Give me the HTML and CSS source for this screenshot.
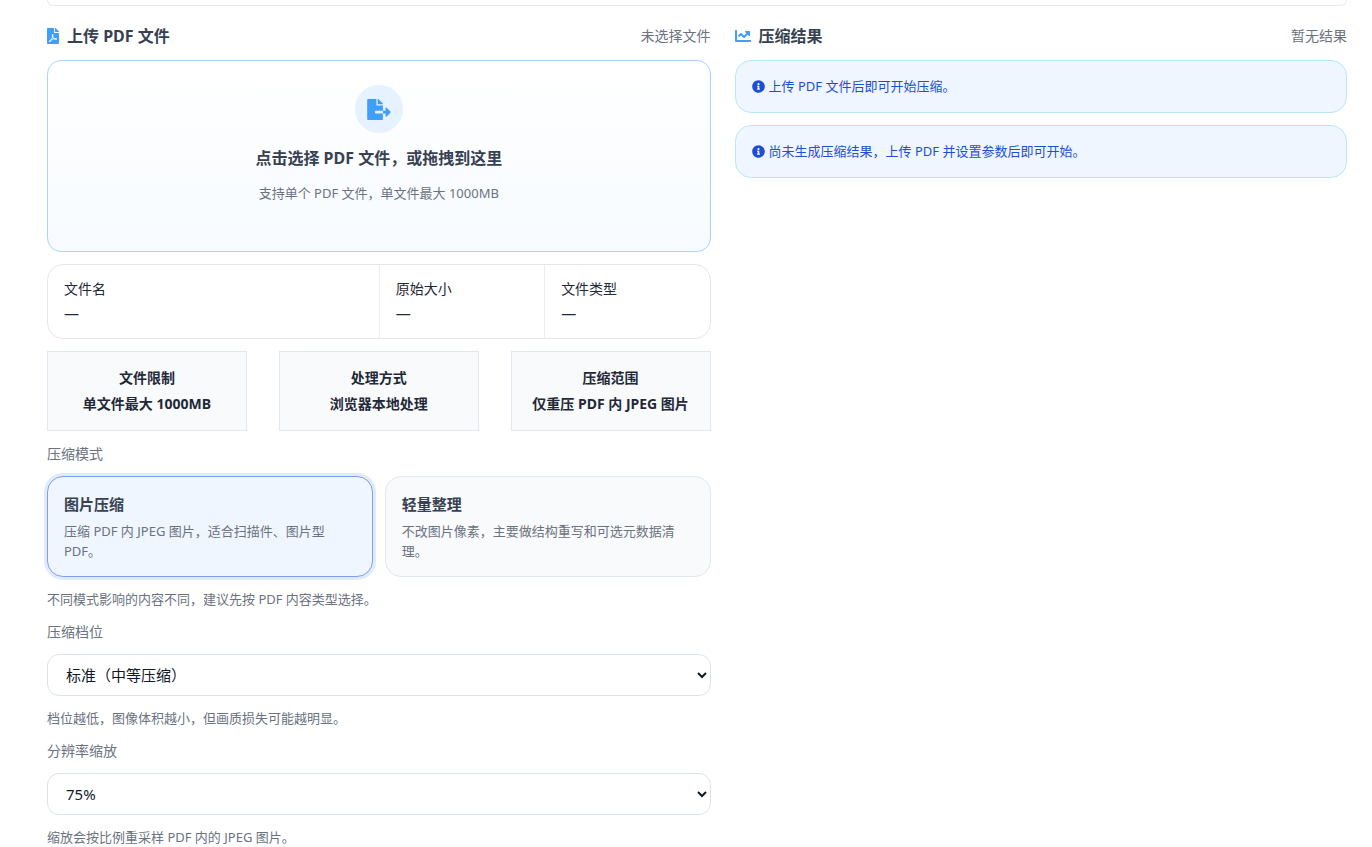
FILE: index.html
```html
<!DOCTYPE html>
<html lang="zh-CN">
<head>
    <meta charset="UTF-8">
    <meta name="viewport" content="width=device-width, initial-scale=1.0">
    <title>PDF 压缩</title>
    <link rel="stylesheet" href="styles.css">
</head>
<body>
    <div class="intro-card"></div>
    <main class="workspace">
        <section class="panel">
            <header class="panel-header">
                <h2>
                    <svg class="icon-file" viewBox="0 0 384 512" aria-hidden="true"><path d="M181.9 256.1c-5-16-4.9-46.9-2-46.9 8.4 0 7.6 36.9 2 46.9zm-1.7 47.2c-7.7 20.2-17.3 43.3-28.4 62.7 18.3-7 39-17.2 62.9-21.9-12.7-9.6-24.9-23.4-34.5-40.8zM86.1 428.1c0 .8 13.2-5.4 34.9-40.2-6.7 6.3-29.1 24.5-34.9 40.2zM248 160h136v328c0 13.3-10.7 24-24 24H24c-13.3 0-24-10.7-24-24V24C0 10.7 10.7 0 24 0h200v136c0 13.2 10.8 24 24 24zm-8 171.8c-20-12.2-33.3-29-42.7-53.8 4.5-18.5 11.6-46.6 6.2-64.2-4.7-29.4-42.4-26.5-47.8-6.8-5 18.3-.4 44.1 8.1 77-11.6 27.6-28.7 64.6-40.8 85.8-.1 0-.1.1-.2.1-27.1 13.9-73.6 44.5-54.5 68 5.6 6.9 16 10 21.5 10 17.9 0 35.7-18 61.1-61.8 25.8-8.5 54.1-19.1 79-23.2 21.7 11.8 47.1 19.5 64 19.5 29.2 0 31.2-32 19.7-43.4-13.9-13.6-54.3-9.7-73.6-7.2zM377 105L279 7c-4.5-4.5-10.6-7-17-7h-6v128h128v-6.1c0-6.3-2.5-12.4-7-16.9zm-74.1 255.3c4.1-2.7-2.5-11.9-42.8-9 37.1 15.8 42.8 9 42.8 9z"/></svg>
                    上传 PDF 文件
                </h2>
                <span class="status">未选择文件</span>
            </header>

            <label class="dropzone">
                <input type="file" class="file-input" accept="application/pdf">
                <span class="dropzone-icon">
                    <svg viewBox="0 0 576 512" aria-hidden="true"><path d="M384 121.9c0-6.3-2.5-12.4-7-16.9L279.1 7c-4.5-4.5-10.6-7-17-7H256v128h128zM571 308l-95.7-96.4c-10.1-10.1-27.4-3-27.4 11.3V288h-64v64h64v65.2c0 14.3 17.3 21.4 27.4 11.3L571 332c6.6-6.6 6.6-17.4 0-24zm-379 28v-32c0-8.8 7.2-16 16-16h176V160H248c-13.2 0-24-10.8-24-24V0H24C10.7 0 0 10.7 0 24v464c0 13.3 10.7 24 24 24h336c13.3 0 24-10.7 24-24V352H208c-8.8 0-16-7.2-16-16z"/></svg>
                </span>
                <span class="dropzone-title">点击选择 PDF 文件，或拖拽到这里</span>
                <span class="dropzone-text">支持单个 PDF 文件，单文件最大 1000MB</span>
            </label>

            <dl class="file-info">
                <div>
                    <dt>文件名</dt>
                    <dd>—</dd>
                </div>
                <div>
                    <dt>原始大小</dt>
                    <dd>—</dd>
                </div>
                <div>
                    <dt>文件类型</dt>
                    <dd>—</dd>
                </div>
            </dl>

            <dl class="limits">
                <div>
                    <dt>文件限制</dt>
                    <dd>单文件最大 1000MB</dd>
                </div>
                <div>
                    <dt>处理方式</dt>
                    <dd>浏览器本地处理</dd>
                </div>
                <div>
                    <dt>压缩范围</dt>
                    <dd>仅重压 PDF 内 JPEG 图片</dd>
                </div>
            </dl>

            <div class="field">
                <span class="field-label" id="modeLabel">压缩模式</span>
                <div class="modes" role="group" aria-labelledby="modeLabel">
                    <button type="button" class="mode active" aria-pressed="true">
                        <strong>图片压缩</strong>
                        <span>压缩 PDF 内 JPEG 图片，适合扫描件、图片型 PDF。</span>
                    </button>
                    <button type="button" class="mode" aria-pressed="false">
                        <strong>轻量整理</strong>
                        <span>不改图片像素，主要做结构重写和可选元数据清理。</span>
                    </button>
                </div>
                <p class="hint">不同模式影响的内容不同，建议先按 PDF 内容类型选择。</p>
            </div>

            <div class="field">
                <label class="field-label" for="level">压缩档位</label>
                <select id="level">
                    <option>标准（中等压缩）</option>
                </select>
                <p class="hint">档位越低，图像体积越小，但画质损失可能越明显。</p>
            </div>

            <div class="field">
                <label class="field-label" for="scale">分辨率缩放</label>
                <select id="scale">
                    <option>75%</option>
                </select>
                <p class="hint">缩放会按比例重采样 PDF 内的 JPEG 图片。</p>
            </div>
        </section>

        <section class="panel">
            <header class="panel-header">
                <h2>
                    <svg class="icon-chart" viewBox="0 0 512 512" aria-hidden="true"><path d="M496 384H64V80c0-8.84-7.16-16-16-16H16C7.16 64 0 71.16 0 80v336c0 17.67 14.33 32 32 32h464c8.84 0 16-7.16 16-16v-32c0-8.84-7.16-16-16-16zM464 96H345.94c-21.38 0-32.09 25.85-16.97 40.97l32.4 32.4L288 242.75l-73.37-73.37c-12.5-12.5-32.76-12.5-45.25 0l-68.69 68.69c-6.25 6.25-6.25 16.38 0 22.63l22.62 22.62c6.25 6.25 16.38 6.25 22.63 0L192 237.25l73.37 73.37c12.5 12.5 32.76 12.5 45.25 0l96-96 32.4 32.4c15.12 15.12 40.97 4.41 40.97-16.97V112c.01-8.84-7.15-16-15.99-16z"/></svg>
                    压缩结果
                </h2>
                <span class="status">暂无结果</span>
            </header>

            <div class="notice">
                <svg viewBox="0 0 512 512" aria-hidden="true"><path d="M256 8C119.043 8 8 119.083 8 256c0 136.997 111.043 248 248 248s248-111.003 248-248C504 119.083 392.957 8 256 8zm0 110c23.196 0 42 18.804 42 42s-18.804 42-42 42-42-18.804-42-42 18.804-42 42-42zm56 254c0 6.627-5.373 12-12 12h-88c-6.627 0-12-5.373-12-12v-24c0-6.627 5.373-12 12-12h12v-64h-12c-6.627 0-12-5.373-12-12v-24c0-6.627 5.373-12 12-12h64c6.627 0 12 5.373 12 12v100h12c6.627 0 12 5.373 12 12v24z"/></svg>
                <span>上传 PDF 文件后即可开始压缩。</span>
            </div>
            <div class="notice">
                <svg viewBox="0 0 512 512" aria-hidden="true"><path d="M256 8C119.043 8 8 119.083 8 256c0 136.997 111.043 248 248 248s248-111.003 248-248C504 119.083 392.957 8 256 8zm0 110c23.196 0 42 18.804 42 42s-18.804 42-42 42-42-18.804-42-42 18.804-42 42-42zm56 254c0 6.627-5.373 12-12 12h-88c-6.627 0-12-5.373-12-12v-24c0-6.627 5.373-12 12-12h12v-64h-12c-6.627 0-12-5.373-12-12v-24c0-6.627 5.373-12 12-12h64c6.627 0 12 5.373 12 12v100h12c6.627 0 12 5.373 12 12v24z"/></svg>
                <span>尚未生成压缩结果，上传 PDF 并设置参数后即可开始。</span>
            </div>
        </section>
    </main>
</body>
</html>
```
FILE: styles.css
```css
* {
    margin: 0;
    padding: 0;
    box-sizing: border-box;
}

body {
    font-family: "Noto Sans", "Noto Sans CJK SC", sans-serif;
    font-size: 14px;
    line-height: 20px;
    color: #1f2937;
    background: #fff;
    padding: 0 25px 0 47px;
}

svg {
    fill: currentColor;
    flex-shrink: 0;
}

.intro-card {
    height: 6px;
    border: 1px solid #e9eaf2;
    border-top: none;
    border-radius: 0 0 16px 16px;
}

.workspace {
    display: grid;
    grid-template-columns: 52fr 48fr;
    gap: 24px;
    align-items: start;
    padding-top: 18px;
}

.panel {
    display: flex;
    flex-direction: column;
    gap: 12px;
    min-width: 0;
}

.panel-header {
    display: flex;
    justify-content: space-between;
    align-items: center;
    height: 24px;
}

.panel-header h2 {
    display: flex;
    align-items: center;
    gap: 8px;
    font-size: 16px;
    line-height: 24px;
    font-weight: 700;
    color: #374151;
}

.panel-header svg {
    height: 16px;
    color: #409eff;
}

.icon-file {
    width: 12px;
}

.icon-chart {
    width: 16px;
}

.status {
    line-height: 22px;
    color: #6b7280;
}

/* Upload area */
.dropzone {
    display: flex;
    flex-direction: column;
    align-items: center;
    min-height: 192px;
    padding: 24px;
    border: 1px solid #a8d3ff;
    border-radius: 14px;
    background: linear-gradient(180deg, #fff, #f7fbff);
    text-align: center;
    cursor: pointer;
}

.file-input {
    position: absolute;
    width: 1px;
    height: 1px;
    opacity: 0;
}

.dropzone-icon {
    display: flex;
    align-items: center;
    justify-content: center;
    width: 48px;
    height: 48px;
    border-radius: 50%;
    background: #e6f2ff;
    color: #409eff;
}

.dropzone-icon svg {
    width: 24px;
    height: 21px;
}

.dropzone-title {
    margin-top: 13px;
    font-size: 16px;
    line-height: 24px;
    font-weight: 700;
    color: #374151;
}

.dropzone-text {
    margin-top: 13px;
    font-size: 13px;
    color: #6b7280;
}

.file-info {
    display: grid;
    grid-template-columns: 2fr 1fr 1fr;
    border: 1px solid #e5e7eb;
    border-radius: 16px;
}

.file-info div {
    padding: 12px 16px 13px;
}

.file-info div + div {
    border-left: 1px solid #ebedf1;
}

.file-info dt,
.file-info dd {
    line-height: 24px;
}

.file-info dd {
    font-size: 15px;
}

.limits {
    display: grid;
    grid-template-columns: repeat(3, 1fr);
    gap: 32px;
}

.limits div {
    padding: 13px 8px;
    border: 1px solid #e2e8f0;
    background: #f8fafc;
    text-align: center;
    white-space: nowrap;
    font-weight: 700;
    line-height: 26px;
}

/* Options */
.field {
    display: flex;
    flex-direction: column;
}

.field-label {
    margin-bottom: 11px;
    line-height: 22px;
    color: #6b7280;
}

.hint {
    margin-top: 12px;
    font-size: 13px;
    color: #6b7280;
}

.modes {
    display: grid;
    grid-template-columns: 1fr 1fr;
    gap: 12px;
}

.mode {
    display: flex;
    flex-direction: column;
    gap: 5px;
    padding: 15px 16px;
    border: 1px solid #e2e8f0;
    border-radius: 16px;
    background: #f8fafc;
    font-family: inherit;
    font-size: 13px;
    line-height: 20px;
    color: #6b7280;
    text-align: left;
    cursor: pointer;
}

.mode strong {
    font-size: 15px;
    line-height: 24px;
    font-weight: 700;
    color: #374151;
}

.mode.active {
    border-color: #7a9ff5;
    background: #eff6ff;
    box-shadow: 0 0 0 3px #e2ebfc;
}

select {
    width: 100%;
    height: 42px;
    padding: 0 14px;
    border: 1px solid #dbe3ef;
    border-radius: 12px;
    background: #fff;
    font-family: inherit;
    font-size: 15px;
    color: #111827;
}

/* Results */
.notice {
    display: flex;
    align-items: center;
    gap: 4px;
    padding: 15px 16px 16px;
    border: 1px solid #bae6fd;
    border-radius: 16px;
    background: #eff6ff;
    font-size: 13px;
    color: #1d4ed8;
}

.notice svg {
    width: 13px;
    height: 13px;
}
```
